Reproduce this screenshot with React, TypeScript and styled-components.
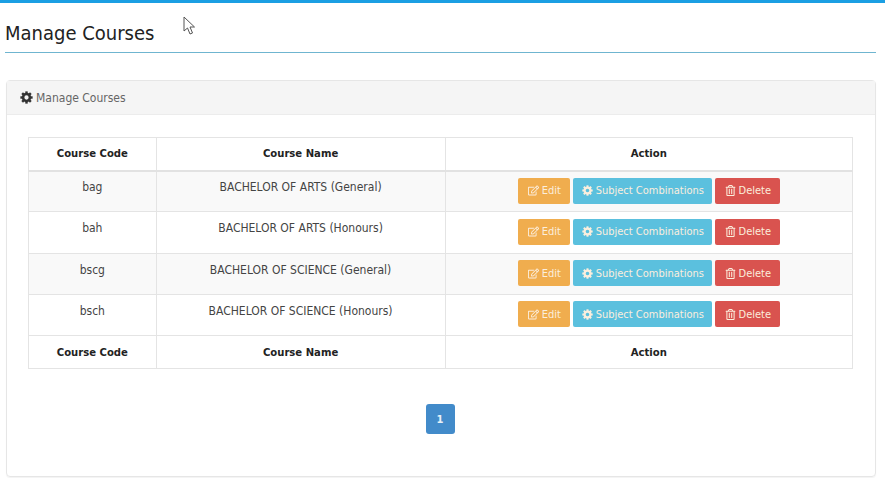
import React from "react";
import styled, { createGlobalStyle } from "styled-components";
import { FaRegEdit, FaRegTrashAlt } from "react-icons/fa";

const Global = createGlobalStyle`
  html, body { margin: 0; padding: 0; background: #fff; }
  body { width: 885px; height: 478px; overflow: hidden; font-family: "DejaVu Sans", "Noto Sans", sans-serif; font-stretch: condensed; color: #333; }
`;
const Page = styled.div`
  position: relative;
  height: 478px;
  border-top: 3px solid #1b9fe3;
  box-sizing: border-box;
  padding: 0 9px 0 6px;
`;
const Title = styled.h1`
  margin: 0 0 0 -1px;
  height: 50px;
  box-sizing: border-box;
  padding: 17px 0 0 0;
  border-bottom: 1px solid #6fb5d0;
  font-size: 20px;
  line-height: 27px;
  font-weight: 400;
  color: #222;
`;
const Panel = styled.section`
  margin-top: 27px;
  height: 397px;
  box-sizing: border-box;
  border: 1px solid #e6e6e6;
  border-radius: 4px;
  box-shadow: 0 1px 1px rgba(0, 0, 0, 0.05);
`;
const PanelHeading = styled.div`
  height: 34px;
  box-sizing: border-box;
  display: flex;
  align-items: center;
  gap: 3px;
  padding: 1px 0 0 13px;
  background: #f5f5f5;
  border-bottom: 1px solid #ececec;
  font-size: 12px;
  color: #666;
  svg { width: 13px; height: 13px; color: #333; margin-top: -2px; }
`;
const PanelBody = styled.div`
  padding: 22px 22px 0 21px;
  display: flex;
  flex-direction: column;
`;
const Table = styled.table`
  width: 825px;
  table-layout: fixed;
  border-collapse: collapse;
  font-size: 12px;
  text-align: center;
`;
const Th = styled.th<{ $w?: number; $thick?: boolean }>`
  width: ${(p) => (p.$w ? `${p.$w}px` : "auto")};
  height: 33px;
  box-sizing: border-box;
  padding: 0;
  border: 1px solid #e4e4e4;
  ${(p) => (p.$thick ? "border-bottom: 2px solid #e2e2e2;" : "")}
  font-weight: 700;
  color: #222;
  font-size: 11.2px;
`;
const Row = styled.tr<{ $odd: boolean }>`
  background: ${(p) => (p.$odd ? "#f9f9f9" : "#fff")};
`;
const Td = styled.td`
  height: 41.25px;
  box-sizing: border-box;
  padding: 0 0 8px;
  border: 1px solid #e4e4e4;
  color: #444;
  font-size: 12px;
`;
const ActionTd = styled(Td)`
  padding: 0 0 1px;
`;
const Actions = styled.div`
  display: flex;
  justify-content: center;
  gap: 3px;
  padding-left: 1px;
`;
const Btn = styled.span<{ $bg: string; $w: number }>`
  width: ${(p) => p.$w}px;
  height: 26px;
  box-sizing: border-box;
  display: inline-flex;
  align-items: center;
  justify-content: center;
  gap: 3px;
  background: ${(p) => p.$bg};
  border-radius: 2px;
  color: #fbeedd;
  font-size: 11px;
  svg { width: 11px; height: 11px; }
`;
const Pager = styled.div`
  align-self: center;
  margin-top: 35px;
  width: 29px;
  height: 30px;
  display: flex;
  align-items: center;
  justify-content: center;
  background: #428bca;
  border-radius: 3px;
  color: #e8f1f8;
  font-size: 11px;
  font-weight: 700;
  margin-right: 1px;
`;
const Cursor = styled.svg`
  position: absolute;
  left: 183px;
  top: 13px;
  width: 13px;
  height: 21px;
`;

const Gear = () => (
  <svg viewBox="0 0 14 14" fill="currentColor" aria-hidden="true">
    <circle cx="7" cy="7" r="3.7" fill="none" stroke="currentColor" strokeWidth="2.8" />
    {[0, 45, 90, 135, 180, 225, 270, 315].map((a) => (
      <rect key={a} x="5.7" y="0.4" width="2.6" height="3" transform={`rotate(${a} 7 7)`} />
    ))}
  </svg>
);

const rows = [
  ["bag", "BACHELOR OF ARTS (General)"],
  ["bah", "BACHELOR OF ARTS (Honours)"],
  ["bscg", "BACHELOR OF SCIENCE (General)"],
  ["bsch", "BACHELOR OF SCIENCE (Honours)"],
];

export default function App() {
  return (
    <>
      <Global />
      <Page>
        <Title>Manage Courses</Title>
        <Cursor viewBox="0 0 13 21">
          <path d="M1 1 L1 15 L4.5 12 L7 18 L9.5 17 L7 11 L11.5 11 Z" fill="#fff" stroke="#555" strokeWidth="1" />
        </Cursor>
        <Panel>
          <PanelHeading>
            <Gear />
            Manage Courses
          </PanelHeading>
          <PanelBody>
            <Table>
              <thead>
                <tr>
                  <Th $w={127.6} $thick>Course Code</Th>
                  <Th $w={289} $thick>Course Name</Th>
                  <Th $thick>Action</Th>
                </tr>
              </thead>
              <tbody>
                {rows.map(([code, name], i) => (
                  <Row key={code} $odd={i % 2 === 0}>
                    <Td>{code}</Td>
                    <Td>{name}</Td>
                    <ActionTd>
                      <Actions>
                        <Btn $bg="#f0ad4e" $w={52}><FaRegEdit />Edit</Btn>
                        <Btn $bg="#5bc0de" $w={139}><Gear />Subject Combinations</Btn>
                        <Btn $bg="#d9534f" $w={65}><FaRegTrashAlt />Delete</Btn>
                      </Actions>
                    </ActionTd>
                  </Row>
                ))}
              </tbody>
              <tfoot>
                <tr>
                  <Th>Course Code</Th>
                  <Th>Course Name</Th>
                  <Th>Action</Th>
                </tr>
              </tfoot>
            </Table>
            <Pager>1</Pager>
          </PanelBody>
        </Panel>
      </Page>
    </>
  );
}
